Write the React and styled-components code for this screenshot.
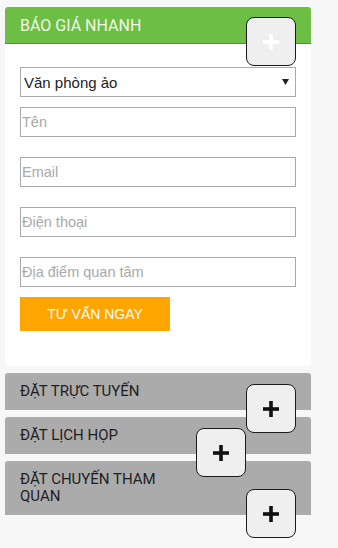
import styled, { createGlobalStyle } from "styled-components";

const GlobalStyle = createGlobalStyle`
  * { box-sizing: border-box; }
  html, body {
    background: #f7f7f7;
  }
  body {
    margin: 0;
    min-height: 100vh;
    font-family: "Liberation Sans", Arial, sans-serif;
  }
`;

const Sidebar = styled.div({
  width: "306px",
  marginLeft: "5px",
  padding: "7px 0 40px",
  display: "flex",
  flexDirection: "column",
  gap: "7px",
});

const Panel = styled.div({
  background: "#fff",
  borderRadius: "4px",
  paddingBottom: "35px",
});

const Header = styled.div(({ $color }) => ({
  position: "relative",
  background: $color || "#ababab",
  borderRadius: "3px 3px 0 0",
  borderBottom: $color ? "1px solid #4b7fae" : "none",
  padding: $color ? "11px 15px 9px" : "10px 15px",
  color: $color ? "#f3f6ec" : "#1e1e1e",
  fontFamily: "Roboto, sans-serif",
  fontSize: $color ? "16px" : "15px",
  lineHeight: $color ? "16px" : "17px",
  minHeight: "37px",
  textTransform: "uppercase",
  span: {
    display: "block",
    maxWidth: "165px",
  },
}));

const ToggleButton = styled.button(({ $light, $right }) => ({
  position: "absolute",
  zIndex: 1,
  right: $right || "15px",
  bottom: "-23px",
  width: "50px",
  height: "49px",
  padding: 0,
  border: "1px solid #1a1a1a",
  borderRadius: "8px",
  background: "#efefef",
  color: $light ? "#ffffff" : "#111111",
  display: "flex",
  alignItems: "center",
  justifyContent: "center",
  cursor: "pointer",
}));

const Form = styled.form({
  padding: "23px 15px 0",
  display: "flex",
  flexDirection: "column",
  gap: "10px",
});

const Fields = styled.div({
  display: "flex",
  flexDirection: "column",
  gap: "20px",
});

const SelectWrap = styled.div({
  position: "relative",
  svg: {
    position: "absolute",
    right: "7px",
    top: "12px",
    pointerEvents: "none",
  },
});

const Select = styled.select({
  width: "100%",
  height: "30px",
  appearance: "none",
  border: "1px solid #a9a9a9",
  borderRadius: 0,
  background: "#fff",
  padding: "0 0 0 3px",
  fontFamily: "inherit",
  fontSize: "15px",
  color: "#222",
});

const Input = styled.input({
  width: "100%",
  height: "30px",
  border: "1px solid #a9a9a9",
  borderRadius: 0,
  padding: "0 0 0 1px",
  fontFamily: "inherit",
  fontSize: "14.5px",
  color: "#222",
  "&::placeholder": {
    color: "#a9a9a9",
  },
});

const Submit = styled.button({
  width: "150px",
  height: "34px",
  border: "none",
  background: "#ffa500",
  color: "#fff",
  fontFamily: "inherit",
  fontSize: "14px",
  textTransform: "uppercase",
  cursor: "pointer",
});

const Plus = () => (
  <svg width="16" height="16" viewBox="0 0 16 16">
    <rect x="0" y="6.2" width="16" height="3.6" fill="currentColor" />
    <rect x="6.2" y="0" width="3.6" height="16" fill="currentColor" />
  </svg>
);

const Bar = ({ title, right }) => (
  <Header>
    <span>{title}</span>
    <ToggleButton type="button" $right={right}>
      <Plus />
    </ToggleButton>
  </Header>
);

const App = () => {
  return (
    <>
      <GlobalStyle />
      <Sidebar>
        <Panel>
          <Header $color="#6dbe45">
            <span>Báo giá nhanh</span>
            <ToggleButton type="button" $light>
              <Plus />
            </ToggleButton>
          </Header>
          <Form onSubmit={(e) => e.preventDefault()}>
            <SelectWrap>
              <Select defaultValue="vpa">
                <option value="vpa">Văn phòng ảo</option>
                <option value="vpcs">Văn phòng chia sẻ</option>
              </Select>
              <svg width="7" height="6" viewBox="0 0 7 6">
                <polygon points="0,0 7,0 3.5,6" fill="#222" />
              </svg>
            </SelectWrap>
            <Fields>
              <Input placeholder="Tên" />
              <Input placeholder="Email" />
              <Input placeholder="Điện thoại" />
              <Input placeholder="Địa điểm quan tâm" />
            </Fields>
            <Submit type="submit">Tư vấn ngay</Submit>
          </Form>
        </Panel>
        <Bar title="Đặt trực tuyến" />
        <Bar title="Đặt lịch họp" right="65px" />
        <Bar title="Đặt chuyến tham quan" />
      </Sidebar>
    </>
  );
};

export default App;
